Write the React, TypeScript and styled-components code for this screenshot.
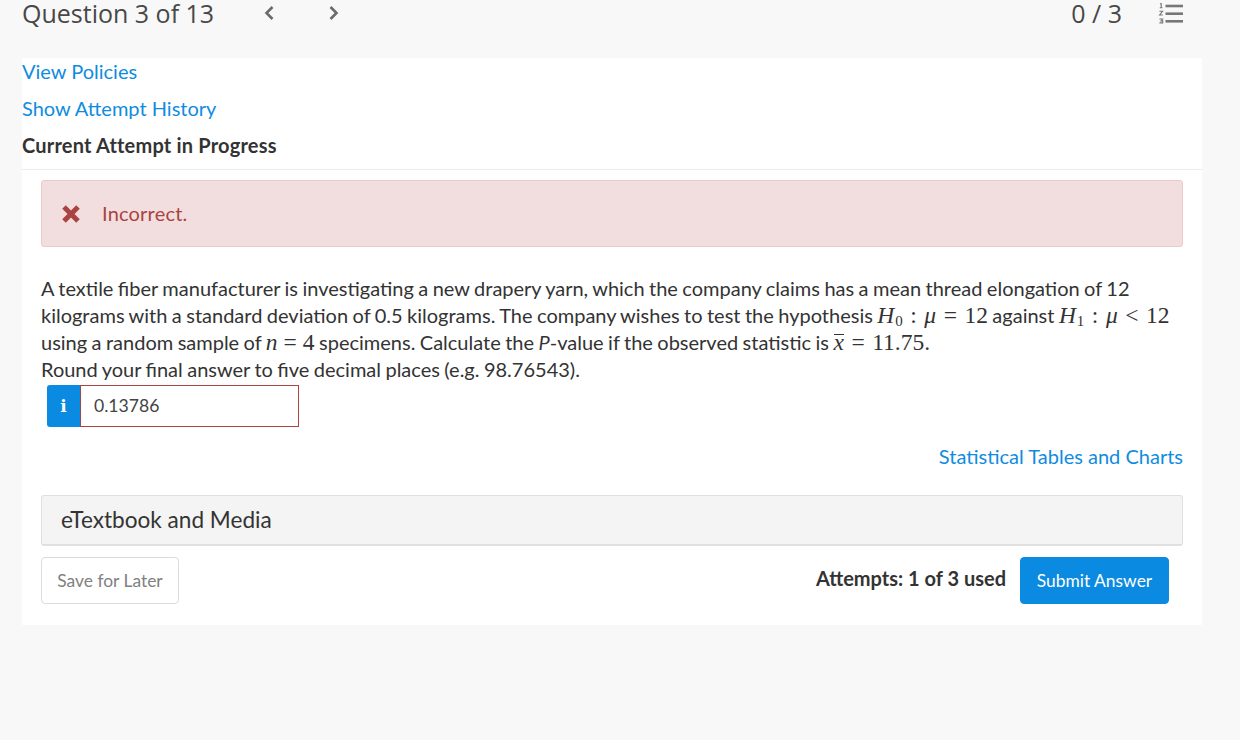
import React from 'react';
import styled, { createGlobalStyle } from 'styled-components';

const GlobalStyle = createGlobalStyle`
  html, body {
    margin: 0;
    padding: 0;
    background: #f8f8f8;
    font-family: Lato, "Liberation Sans", sans-serif;
    color: #333;
  }
`;

const Page = styled.div`
  width: 1240px;
  height: 740px;
  overflow: hidden;
`;

const Header = styled.header`
  display: flex;
  align-items: flex-start;
  height: 58px;
  padding: 0 56px 0 22px;
  box-sizing: border-box;
  font-family: "Open Sans", sans-serif;
  color: #484848;
`;

const QuestionTitle = styled.div`
  font-size: 25px;
  line-height: 26px;
  width: 239px;
`;

const NavArrow = styled.button`
  width: 16px;
  height: 26px;
  padding: 0;
  border: 0;
  background: none;
  margin-right: 49px;
  color: #6b6b6b;
  display: flex;
  align-items: center;
  justify-content: center;
`;

const Score = styled.div`
  margin-left: auto;
  font-size: 25px;
  line-height: 26px;
  margin-right: 36px;
`;

const ListIcon = styled.svg`
  width: 26px;
  height: 22px;
  margin-top: 3px;
`;

const Panel = styled.main`
  width: 1180px;
  height: 567px;
  margin-left: 22px;
  background: #fff;
`;

const TopLinks = styled.div`
  display: flex;
  flex-direction: column;
  gap: 11px;
  height: 111px;
  border-bottom: 1px solid #ececec;
  font-size: 20px;
  line-height: 26px;
`;

const TextLink = styled.a`
  display: block;
  color: #0f8ce0;
  text-decoration: none;
`;

const ProgressLabel = styled.div`
  font-weight: 700;
  letter-spacing: 0.19px;
  color: #333;
`;

const Body = styled.div`
  padding: 10px 19px 0;
`;

const Alert = styled.div`
  display: flex;
  align-items: center;
  gap: 20px;
  height: 67px;
  box-sizing: border-box;
  padding-left: 19px;
  background: #f2dede;
  border: 1px solid #ebcccc;
  border-radius: 3px;
  color: #a94442;
  font-size: 20px;
  letter-spacing: 0.2px;
`;

const AlertText = styled.span`
  margin: 0 0 2px 1px;
`;

const QuestionText = styled.div`
  margin-top: 28px;
  font-size: 20px;
  line-height: 27px;
  word-spacing: -0.68px;
  color: #333;
  white-space: nowrap;
`;

const MathText = styled.span`
  font-family: "Liberation Serif", serif;
  font-size: 23.5px;
  word-spacing: 0;
`;

const Var = styled.i`
  font-style: italic;
`;

const Sub = styled.span`
  font-size: 15px;
  line-height: 0;
  vertical-align: -3px;
  margin-left: 1px;
`;

const Op = styled.span<{ $tight?: boolean }>`
  margin: 0 ${p => (p.$tight ? '6px' : '7.5px')};
`;

const XBar = styled.i`
  position: relative;
  font-style: italic;

  &::before {
    content: "";
    position: absolute;
    left: 1px;
    right: 0;
    top: 5px;
    border-top: 1px solid #333;
  }
`;

const AnswerRow = styled.div`
  display: flex;
  margin: 2px 0 0 6px;
  height: 42px;
`;

const InfoTab = styled.div`
  width: 33px;
  background: #0a8ae0;
  border-radius: 3px 0 0 3px;
  color: #fff;
  font-family: "DejaVu Serif", serif;
  font-weight: 700;
  font-size: 17px;
  display: flex;
  align-items: center;
  justify-content: center;
`;

const AnswerBox = styled.div`
  width: 219px;
  box-sizing: border-box;
  border: 1px solid #a94442;
  padding: 0 0 1px 13px;
  display: flex;
  align-items: center;
  font-size: 17.6px;
  color: #444;
`;

const TablesRow = styled.div`
  display: flex;
  justify-content: flex-end;
  margin-top: 16px;
  font-size: 20px;
  line-height: 27px;
`;

const MediaBar = styled.div`
  margin-top: 25px;
  height: 51px;
  box-sizing: border-box;
  padding: 0 0 2px 19px;
  display: flex;
  align-items: center;
  background: #f4f4f4;
  border: 1px solid #e0e0e0;
  border-bottom-width: 2px;
  border-radius: 3px;
  font-size: 22.6px;
  color: #333;
`;

const Actions = styled.div`
  display: flex;
  align-items: center;
  margin-top: 11px;
  padding-right: 14px;
`;

const Button = styled.button<{ $primary?: boolean }>`
  height: 47px;
  border-radius: 4px;
  font-family: Lato, sans-serif;
  font-size: 17.4px;
  border: 1px solid ${p => (p.$primary ? '#0a8ae0' : '#dcdcdc')};
  background: ${p => (p.$primary ? '#0a8ae0' : '#fff')};
  color: ${p => (p.$primary ? '#fff' : '#808080')};
  width: ${p => (p.$primary ? '149px' : '138px')};
  padding: 0;
`;

const AttemptsLabel = styled.div`
  margin: 0 14px 6px auto;
  font-size: 20px;
  font-weight: 700;
  color: #333;
`;

const App: React.FC = () => {
  return (
    <Page>
      <GlobalStyle />
      <Header>
        <QuestionTitle>Question 3 of 13</QuestionTitle>
        <NavArrow aria-label="Previous">
          <svg width="12" height="16" viewBox="0 0 12 16" fill="none" stroke="currentColor" strokeWidth="2.6">
            <path d="M9.500 2 3.500 8 9.500 14" />
          </svg>
        </NavArrow>
        <NavArrow aria-label="Next">
          <svg width="12" height="16" viewBox="0 0 12 16" fill="none" stroke="currentColor" strokeWidth="2.6">
            <path d="M2.500 2 8.500 8 2.500 14" />
          </svg>
        </NavArrow>
        <Score>0 / 3</Score>
        <ListIcon viewBox="0 0 26 22">
          <g fill="#777">
            <rect x="7.500" y="1.700" width="17.500" height="2.600" />
            <rect x="7.500" y="9.400" width="17.500" height="2.600" />
            <rect x="7.500" y="17" width="17.500" height="2.600" />
          </g>
          <g fill="none" stroke="#777" strokeWidth="1.100">
            <path d="M2 1 3.200 .6V4.800M1.800 4.800H4.500" />
            <path d="M1.400 8.300H4.600L1.600 12H4.800" />
            <path d="M1.400 16H4.600L3 17.900H4.700V19.900H1.400" />
          </g>
        </ListIcon>
      </Header>
      <Panel>
        <TopLinks>
          <TextLink href="#">View Policies</TextLink>
          <TextLink href="#">Show Attempt History</TextLink>
          <ProgressLabel>Current Attempt in Progress</ProgressLabel>
        </TopLinks>
        <Body>
          <Alert>
            <svg width="20" height="20" viewBox="0 0 20 20" fill="none" stroke="#a94442" strokeWidth="5">
              <path d="M3 3 17 17M17 3 3 17" />
            </svg>
            <AlertText>Incorrect.</AlertText>
          </Alert>
          <QuestionText>
            A textile fiber manufacturer is investigating a new drapery yarn, which the company claims has a mean thread elongation of 12
            <br />
            kilograms with a standard deviation of 0.5 kilograms. The company wishes to test the hypothesis{' '}
            <MathText><Var>H</Var><Sub>0</Sub><Op>:</Op><Var>μ</Var><Op>=</Op>12</MathText> against{' '}
            <MathText><Var>H</Var><Sub>1</Sub><Op>:</Op><Var>μ</Var><Op>&lt;</Op>12</MathText>
            <br />
            using a random sample of <MathText><Var>n</Var><Op $tight>=</Op>4</MathText> specimens. Calculate the <Var>P</Var>-value if the observed statistic is{' '}
            <MathText><XBar>x</XBar><Op>=</Op>11.75.</MathText>
            <br />
            Round your final answer to five decimal places (e.g. 98.76543).
          </QuestionText>
          <AnswerRow>
            <InfoTab>i</InfoTab>
            <AnswerBox>0.13786</AnswerBox>
          </AnswerRow>
          <TablesRow>
            <TextLink href="#">Statistical Tables and Charts</TextLink>
          </TablesRow>
          <MediaBar>eTextbook and Media</MediaBar>
          <Actions>
            <Button>Save for Later</Button>
            <AttemptsLabel>Attempts: 1 of 3 used</AttemptsLabel>
            <Button $primary>Submit Answer</Button>
          </Actions>
        </Body>
      </Panel>
    </Page>
  );
};

export default App;
